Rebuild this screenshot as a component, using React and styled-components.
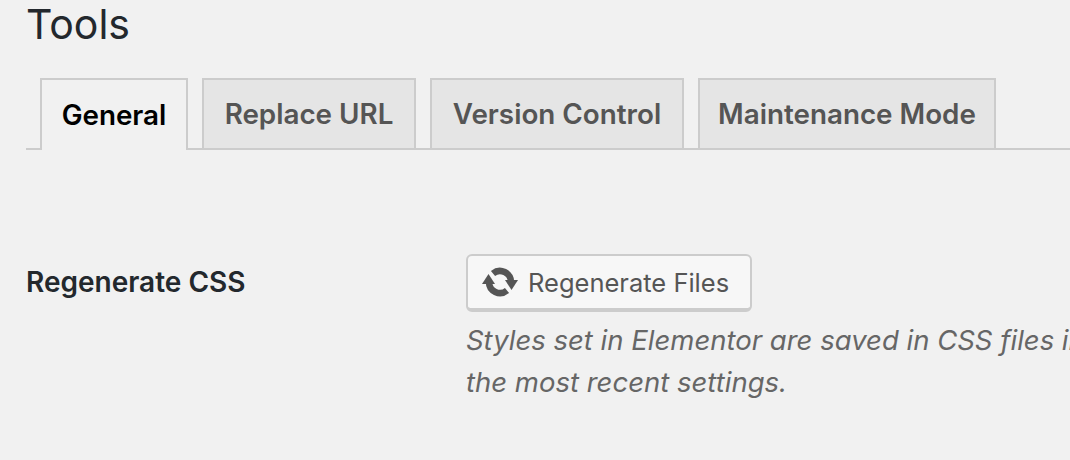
import React from "react";
import styled, { createGlobalStyle } from "styled-components";

const Global = createGlobalStyle`
  html, body { margin: 0; padding: 0; background: #f1f1f1; height: 460px; overflow: hidden; }
  body { font-family: Inter, Roboto, "Liberation Sans", sans-serif; }
`;
const Page = styled.div`
  width: 1070px;
  height: 460px;
  overflow: hidden;
  padding-left: 26px;
  box-sizing: border-box;
`;
const Title = styled.h1`
  margin: 0;
  height: 78px;
  font-size: 41px;
  line-height: 48px;
  font-weight: 400;
  color: #23282d;
`;
const TabBar = styled.nav`
  display: flex;
  gap: 14px;
  padding-left: 14px;
  height: 72px;
  box-sizing: border-box;
  border-bottom: 2px solid #ccc;
`;
const Tab = styled.a`
  box-sizing: border-box;
  width: ${(p) => p.$w}px;
  height: 72px;
  display: flex;
  align-items: center;
  justify-content: center;
  padding-bottom: 1px;
  border: 2px solid #ccc;
  border-bottom: ${(p) => (p.$active ? "none" : "2px solid #ccc")};
  background: ${(p) => (p.$active ? "#f1f1f1" : "#e5e5e5")};
  color: ${(p) => (p.$active ? "#000" : "#555")};
  font-size: 27.8px;
  font-weight: 600;
  white-space: nowrap;
`;
const Row = styled.section`
  display: flex;
  margin-top: 104px;
`;
const Label = styled.div`
  width: 440px;
  flex: none;
  font-size: 28px;
  font-weight: 600;
  line-height: 56px;
  color: #23282d;
`;
const Field = styled.div`
  flex: none;
  width: 640px;
`;
const Button = styled.button`
  box-sizing: border-box;
  display: flex;
  align-items: center;
  gap: 10px;
  height: 58px;
  width: 286px;
  padding: 0 14px;
  background: #f7f7f7;
  border: 2px solid #ccc;
  border-bottom-width: 4px;
  border-radius: 6px;
  color: #555;
  font-family: inherit;
  font-size: 25.5px;
  white-space: nowrap;
`;
const Spin = styled.svg`
  width: 36px;
  height: 30px;
  flex: none;
`;
const Desc = styled.p`
  margin: 7px 0 0;
  font-size: 27.5px;
  line-height: 42px;
  font-style: italic;
  color: #666;
  white-space: nowrap;
`;

export default function App() {
  return (
    <Page>
      <Global />
      <Title>Tools</Title>
      <TabBar>
        <Tab $active $w={148}>General</Tab>
        <Tab $w={214}>Replace URL</Tab>
        <Tab $w={254}>Version Control</Tab>
        <Tab $w={298}>Maintenance Mode</Tab>
      </TabBar>
      <Row>
        <Label>Regenerate CSS</Label>
        <Field>
          <Button>
            <Spin viewBox="0 0 36 30">
              <path d="M11 6.5A11 11 0 0 1 29 15" fill="none" stroke="#555" strokeWidth="6.5" />
              <path d="M25 23.5A11 11 0 0 1 7 15" fill="none" stroke="#555" strokeWidth="6.5" />
              <polygon points="23,13 36,13 29.5,23" fill="#555" />
              <polygon points="0,17 13,17 6.5,7" fill="#555" />
            </Spin>
            Regenerate Files
          </Button>
          <Desc>
            Styles set in Elementor are saved in CSS files in the uploads folder.
            <br />
            the most recent settings.
          </Desc>
        </Field>
      </Row>
    </Page>
  );
}
